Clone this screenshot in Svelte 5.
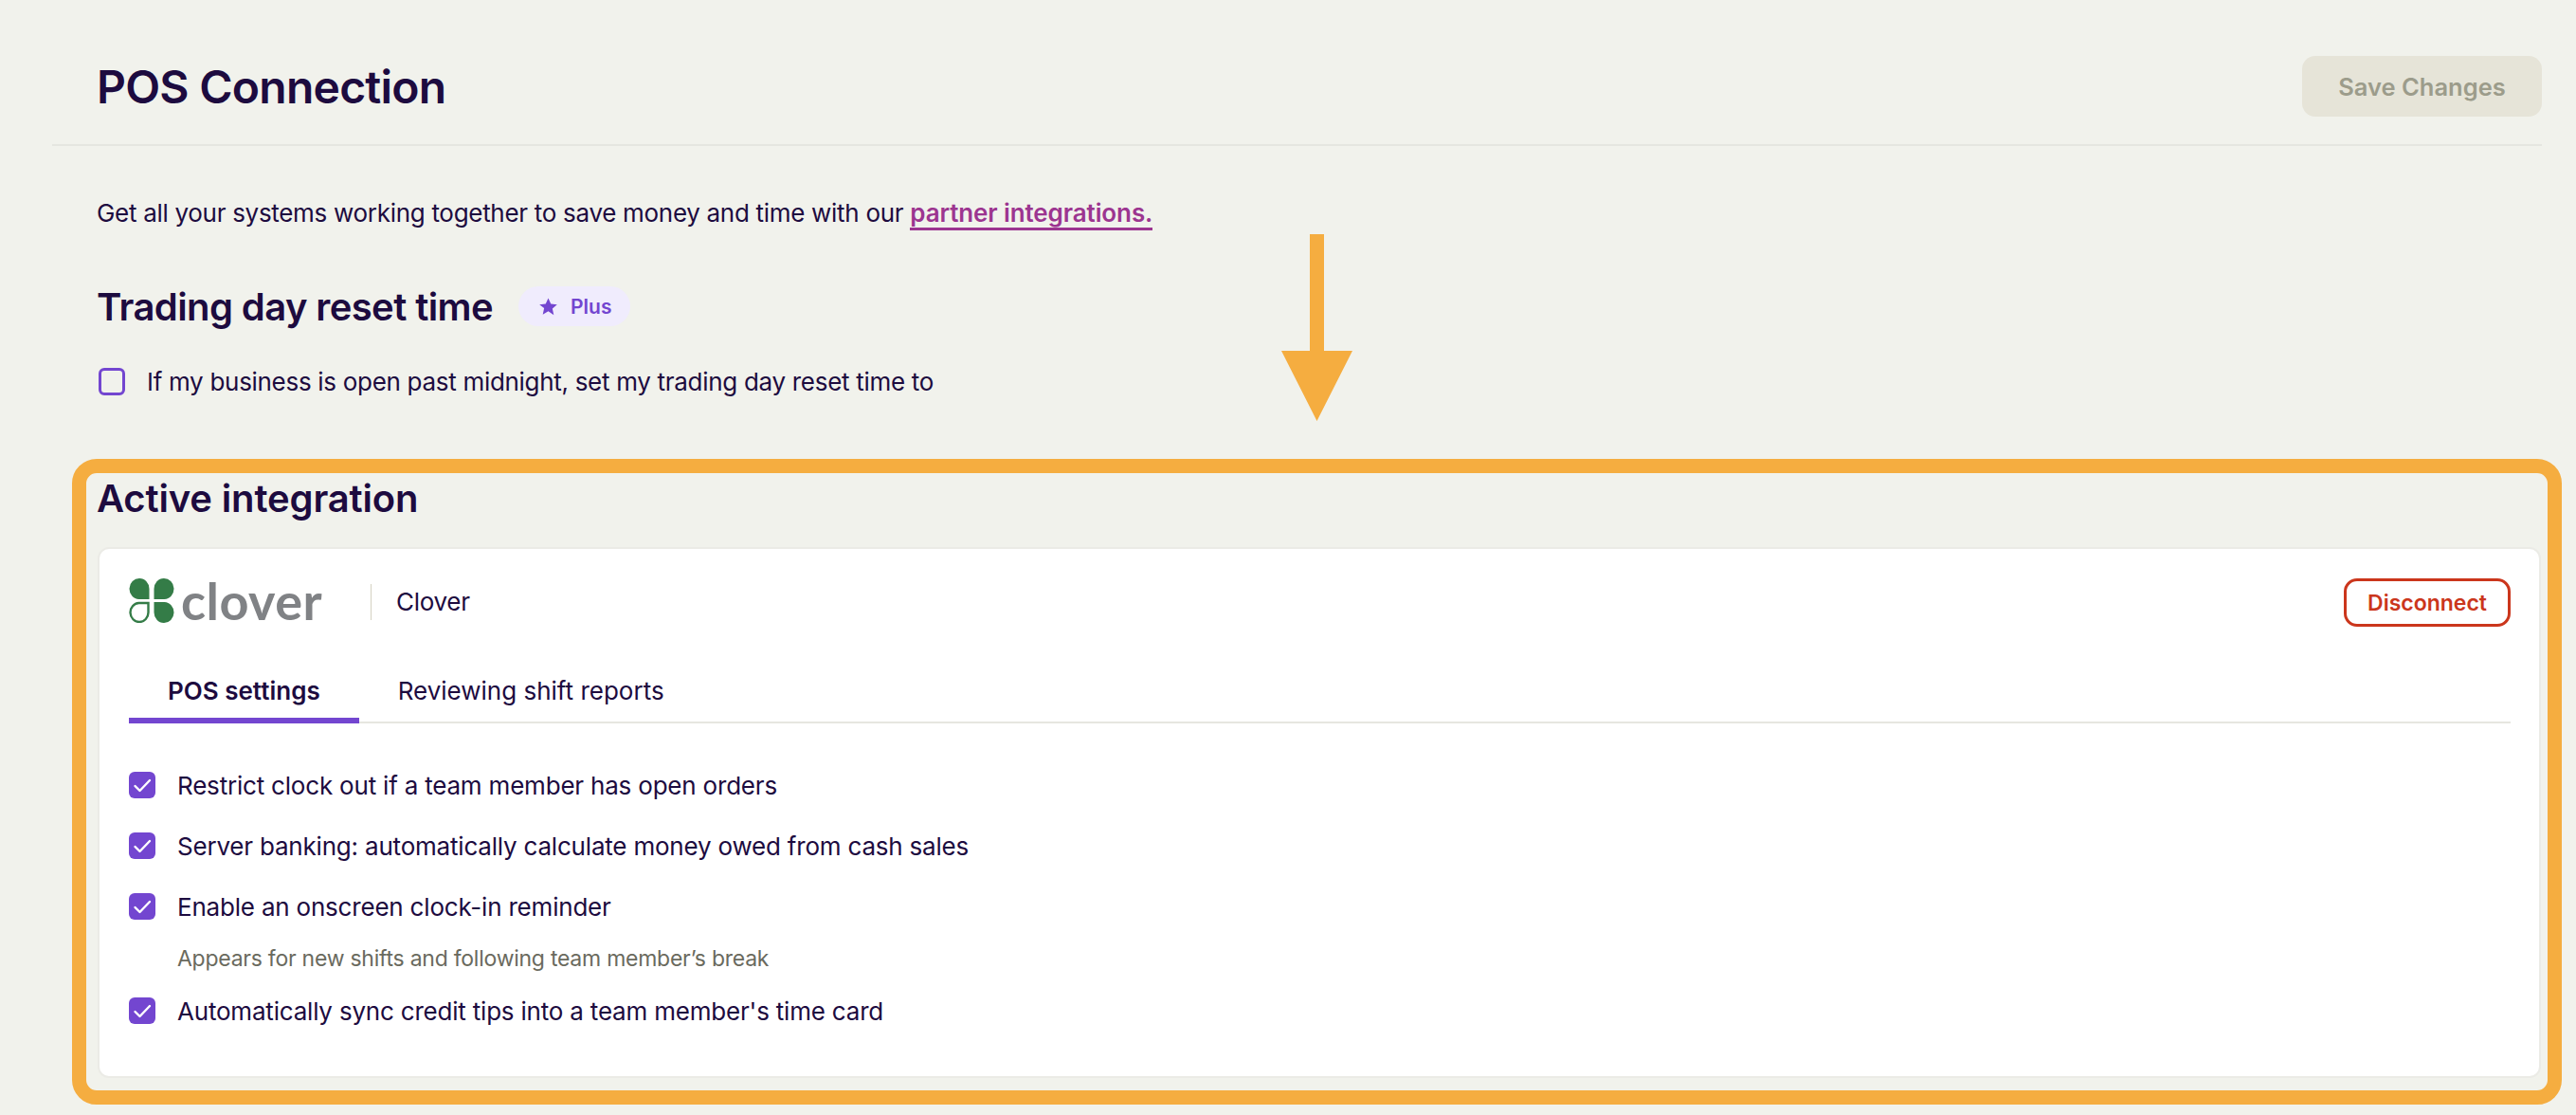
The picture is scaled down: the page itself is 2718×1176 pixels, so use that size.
<script>
  const options = [
    { label: 'Restrict clock out if a team member has open orders' },
    { label: 'Server banking: automatically calculate money owed from cash sales' },
    {
      label: 'Enable an onscreen clock-in reminder',
      hint: 'Appears for new shifts and following team member’s break'
    },
    { label: "Automatically sync credit tips into a team member's time card" }
  ];
</script>

<div class="page">
  <header class="top">
    <h1>POS Connection</h1>
    <button class="save" disabled>Save Changes</button>
  </header>

  <p class="intro">
    Get all your systems working together to save money and time with our
    <a href="#partners">partner integrations.</a>
  </p>

  <div class="reset-head">
    <h2>Trading day reset time</h2>
    <span class="badge">
      <svg viewBox="0 0 20 20" width="19" height="19">
        <path d="M10 0.5l2.9 6.4 6.9.7-5.2 4.6 1.5 6.9L10 15l-6.1 3.600 1.500-6.900L.2 7.600l6.900-.7z" fill="#7346d0" />
      </svg>
      Plus
    </span>
  </div>

  <label class="reset-row">
    <span class="box"></span>
    If my business is open past midnight, set my trading day reset time to
  </label>

  <section class="frame">
    <h2 class="active-title">Active integration</h2>
    <div class="card">
      <div class="card-head">
        <div class="logo">
          <svg viewBox="0 0 48 47" width="48" height="47">
            <path d="M21.500 22H10.500A10.500 11 0 1 1 21.500 11Z" fill="#347c47" />
            <path d="M26.500 22H37.500A10.500 11 0 1 0 26.500 11Z" fill="#347c47" />
            <path d="M20.500 26H10.500A9.500 10 0 1 0 20.500 36Z" fill="none" stroke="#347c47" stroke-width="2.400" />
            <path d="M26.500 25H37.500A10.500 11 0 1 1 26.500 36Z" fill="#347c47" />
          </svg>
          <span class="wordmark">clover</span>
        </div>
        <span class="sep"></span>
        <span class="name">Clover</span>
        <button class="disconnect">Disconnect</button>
      </div>

      <div class="tabs">
        <button class="tab active">POS settings</button>
        <button class="tab">Reviewing shift reports</button>
      </div>

      <ul class="options">
        {#each options as opt}
          <li>
            <div class="opt-row">
              <span class="check">
                <svg viewBox="0 0 28 28" width="28" height="28">
                  <path d="M6.500 15l5 5L22 9" fill="none" stroke="#fff" stroke-width="2.400" stroke-linecap="round" stroke-linejoin="round" />
                </svg>
              </span>
              <span>{opt.label}</span>
            </div>
            {#if opt.hint}
              <div class="hint">{opt.hint}</div>
            {/if}
          </li>
        {/each}
      </ul>
    </div>
  </section>

  <svg class="arrow" viewBox="0 0 75 197" width="75" height="197">
    <path d="M30 0H45V123H75L37.500 197L0 123H30Z" fill="#f5ad40" />
  </svg>
</div>

<style>
  :global(body) {
    margin: 0;
    background: #f1f2ec;
  }

  .page {
    position: relative;
    height: 1176px;
    overflow: hidden;
    font-family: Inter, 'Liberation Sans', sans-serif;
    color: #1d0b3f;
    font-size: 26px;
    letter-spacing: -0.3px;
  }

  h1, h2, p {
    margin: 0;
  }

  button {
    font-family: inherit;
    cursor: pointer;
  }

  .top {
    display: flex;
    align-items: center;
    justify-content: space-between;
    height: 122px;
    margin: 0 36px 0 55px;
    padding: 30px 0 0 47px;
    border-bottom: 2px solid #e5e6e0;
  }

  h1 {
    font-size: 48px;
    font-weight: 600;
    letter-spacing: -0.75px;
    color: #1d0b3f;
  }

  .save {
    width: 253px;
    height: 64px;
    border: none;
    border-radius: 14px;
    background: #e6e4d8;
    color: #9c9c8b;
    font-size: 25.500px;
    font-weight: 600;
    letter-spacing: 0;
  }

  .intro {
    margin: 53px 0 0 102px;
    line-height: 36px;
  }

  .intro a {
    color: #9c3590;
    font-weight: 600;
    letter-spacing: -0.1px;
    text-decoration: none;
    border-bottom: 3px solid #9c3590;
  }

  .reset-head {
    display: flex;
    align-items: center;
    gap: 27px;
    margin: 59px 0 0 102px;
    height: 42px;
  }

  .reset-head h2 {
    font-size: 40px;
    font-weight: 600;
    letter-spacing: -0.6px;
  }

  .badge {
    display: inline-flex;
    align-items: center;
    gap: 14px;
    height: 42px;
    padding: 0 20px 0 22px;
    border-radius: 21px;
    background: #f0ecfd;
    color: #7346d0;
    font-size: 21px;
    font-weight: 600;
    letter-spacing: 0;
  }

  .reset-row {
    display: flex;
    align-items: center;
    gap: 23px;
    margin: 43px 0 0 104px;
    height: 30px;
  }

  .box {
    width: 28px;
    height: 29px;
    box-sizing: border-box;
    border: 3px solid #7346d0;
    border-radius: 6px;
  }

  .frame {
    position: absolute;
    left: 76px;
    top: 484px;
    width: 2627px;
    height: 681px;
    box-sizing: border-box;
    border: 15px solid #f5ad40;
    border-radius: 26px;
    padding: 0 7px 13px 12px;
    display: flex;
    flex-direction: column;
  }

  .active-title {
    height: 78px;
    font-size: 40px;
    font-weight: 600;
    line-height: 54px;
    letter-spacing: -0.15px;
    margin-left: -1px;
  }

  .card {
    flex: 1;
    box-sizing: border-box;
    background: #fff;
    border: 2px solid #ebebe6;
    border-radius: 12px;
    padding: 0 30px 0 31px;
  }

  .card-head {
    display: flex;
    align-items: center;
    height: 111px;
  }

  .logo {
    display: flex;
    align-items: center;
    gap: 7px;
    width: 255px;
    margin-top: -2px;
  }

  .wordmark {
    font-family: Lato, sans-serif;
    font-size: 54px;
    font-weight: 700;
    line-height: 47px;
    color: #808285;
    letter-spacing: 0.5px;
  }

  .sep {
    width: 1px;
    height: 38px;
    background: #d4d2c2;
  }

  .name {
    margin-left: 26px;
  }

  .disconnect {
    width: 176px;
    height: 51px;
    margin-left: auto;
    box-sizing: border-box;
    border: 3px solid #cb361c;
    border-radius: 14px;
    background: #fff;
    color: #cb361c;
    font-size: 23px;
    font-weight: 600;
    letter-spacing: 0;
    padding: 0;
    margin-top: 2px;
  }

  .tabs {
    display: flex;
    height: 73px;
    box-sizing: border-box;
    border-bottom: 2px solid #e6e6e0;
  }

  .tab {
    height: 73px;
    padding: 10px 41px 0;
    border: none;
    border-bottom: 6px solid transparent;
    background: none;
    color: #1d0b3f;
    font-size: 26px;
    letter-spacing: 0;
  }

  .tab.active {
    font-weight: 600;
    border-bottom-color: #7346d0;
  }

  .options {
    list-style: none;
    margin: 0;
    padding: 51px 0 0;
    letter-spacing: -0.2px;
  }

  .options li {
    margin-bottom: 36px;
  }

  .opt-row {
    display: flex;
    align-items: center;
    gap: 23px;
    height: 28px;
  }

  .check {
    display: block;
    width: 28px;
    height: 28px;
    border-radius: 6px;
    background: #7346d0;
  }

  .check svg {
    display: block;
  }

  .hint {
    margin: 27px 0 -9px 51px;
    font-size: 23px;
    line-height: 28px;
    letter-spacing: -0.25px;
    color: #6a6a5e;
  }

  .arrow {
    position: absolute;
    left: 1352px;
    top: 247px;
  }
</style>
